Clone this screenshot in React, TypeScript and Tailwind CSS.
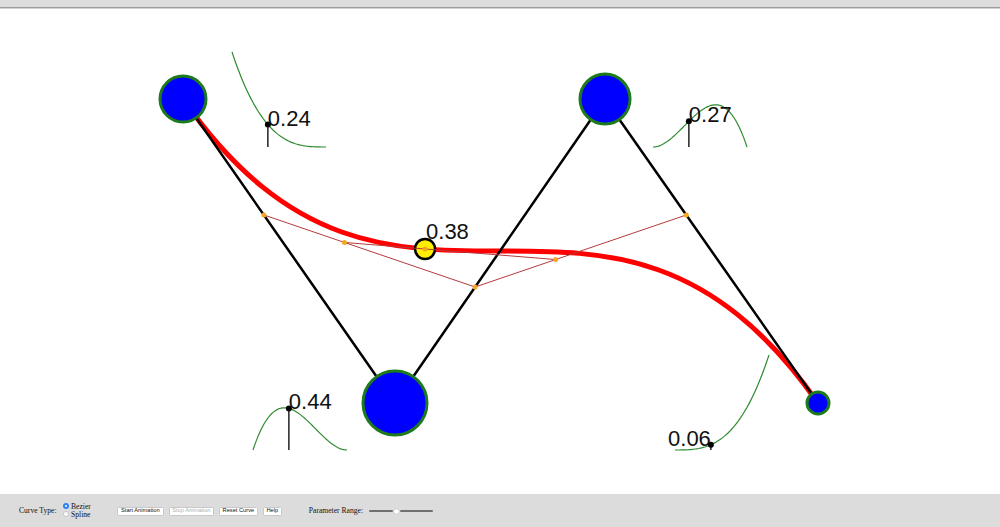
import React from "react";

type Pt = { x: number; y: number };

// control points of the cubic, in page coordinates
const points: Pt[] = [
  { x: 183, y: 99 },
  { x: 395, y: 403 },
  { x: 605, y: 99 },
  { x: 818, y: 403 },
];
const radii = [23, 32, 25, 11];
const T = 0.3815;

const lerp = (a: Pt, b: Pt, t: number): Pt => ({ x: a.x + (b.x - a.x) * t, y: a.y + (b.y - a.y) * t });

const basis = [
  (t: number) => (1 - t) ** 3,
  (t: number) => 3 * t * (1 - t) ** 2,
  (t: number) => 3 * t * t * (1 - t),
  (t: number) => t ** 3,
];

// little weight plots next to each control point
const graphs = [
  { x0: 232, bottom: 147, anchor: "start" },
  { x0: 253, bottom: 450, anchor: "start" },
  { x0: 653, bottom: 147, anchor: "start" },
  { x0: 675, bottom: 450, anchor: "end" },
];
const GW = 94;
const GH = 95;

const graphPath = (i: number) => {
  const g = graphs[i];
  let d = "";
  for (let k = 0; k <= 60; k++) {
    const t = k / 60;
    const x = g.x0 + t * GW;
    const y = g.bottom - basis[i](t) * GH;
    d += `${k === 0 ? "M" : "L"}${x.toFixed(2)} ${y.toFixed(2)} `;
  }
  return d;
};

const Curve = () => {
  const q = [lerp(points[0], points[1], T), lerp(points[1], points[2], T), lerp(points[2], points[3], T)];
  const r = [lerp(q[0], q[1], T), lerp(q[1], q[2], T)];
  const b = lerp(r[0], r[1], T);
  const font = { fontFamily: '"Liberation Sans", Arial, sans-serif' };

  return (
    <svg width={1000} height={485} viewBox="0 9 1000 485" className="block">
      {/* basis plots */}
      {graphs.map((g, i) => {
        const v = basis[i](T);
        const dx = g.x0 + T * GW;
        const dy = g.bottom - v * GH;
        return (
          <g key={i}>
            <path d={graphPath(i)} fill="none" stroke="#2f8a2f" strokeWidth={1.2} />
            <line x1={dx} y1={dy} x2={dx} y2={g.bottom} stroke="#222" strokeWidth={1.5} />
            <circle cx={dx} cy={dy} r={3} fill="#000" />
            <text x={dx} y={dy + 1} fontSize={22} fill="#111" textAnchor={g.anchor as "start" | "end"} style={font}>
              {v.toFixed(2)}
            </text>
          </g>
        );
      })}

      {/* the curve */}
      <path
        d={`M${points[0].x} ${points[0].y} C${points[1].x} ${points[1].y} ${points[2].x} ${points[2].y} ${points[3].x} ${points[3].y}`}
        fill="none"
        stroke="#ff0000"
        strokeWidth={5}
      />

      {/* control polygon */}
      <polyline points={points.map((p) => `${p.x},${p.y}`).join(" ")} fill="none" stroke="#000" strokeWidth={2.5} />

      {/* point on curve */}
      <circle cx={b.x} cy={b.y} r={10} fill="#ffee00" stroke="#000" strokeWidth={2.5} />

      {/* de Casteljau construction */}
      <polyline points={q.map((p) => `${p.x},${p.y}`).join(" ")} fill="none" stroke="#b53a3a" strokeWidth={1} />
      <line x1={r[0].x} y1={r[0].y} x2={r[1].x} y2={r[1].y} stroke="#b53a3a" strokeWidth={1} />
      {[...q, ...r, b].map((p, i) => (
        <circle key={i} cx={p.x} cy={p.y} r={2.5} fill="#f5a623" />
      ))}

      <text x={b.x + 1} y={b.y - 10} fontSize={22} fill="#111" style={font}>
        {T.toFixed(2)}
      </text>

      {/* control points */}
      {points.map((p, i) => (
        <circle key={i} cx={p.x} cy={p.y} r={radii[i]} fill="#0000ff" stroke="#1d7a1d" strokeWidth={3} />
      ))}
    </svg>
  );
};

const Radio = ({ checked }: { checked: boolean }) =>
  checked ? (
    <span className="flex w-[6.5px] h-[6.5px] rounded-full bg-[#2f7ff5] items-center justify-center">
      <span className="w-[2px] h-[2px] rounded-full bg-white" />
    </span>
  ) : (
    <span className="block w-[6.5px] h-[6.5px] rounded-full bg-white border-[0.5px] border-[#c4c4c4]" />
  );

const Btn = ({ label, w, disabled }: { label: string; w: string; disabled?: boolean }) => (
  <button
    className={`${w} h-[9px] flex items-center justify-center rounded-[1.5px] bg-white border-[0.5px] border-[#c8c8c8] text-[5.7px] leading-none whitespace-nowrap font-['Liberation_Sans',Arial,sans-serif] ${
      disabled ? "text-[#b0b0b0]" : "text-[#111]"
    }`}
  >
    {label}
  </button>
);

export default function App() {
  return (
    <div className="w-[1000px] h-[527px] flex flex-col bg-white overflow-hidden">
      <div className="h-[7px] bg-[#dddddd]" />
      <div className="h-[1px] bg-[#9c9c9c]" />
      <div className="h-[1px] bg-[#d2d2d2]" />

      <div className="flex-1 min-h-0">
        <Curve />
      </div>

      <div className="h-[33px] bg-[#dcdcdc] flex items-center pl-[19px] text-[7.6px] text-[#111] font-['Liberation_Serif','Times_New_Roman',serif]">
        <span className="mt-[1px]">Curve Type:</span>
        <div className="flex flex-col ml-[6px] gap-[1px] -mt-[1px]">
          <label className="flex items-center gap-[2px] leading-[7px]">
            <Radio checked />
            <span>Bezier</span>
          </label>
          <label className="flex items-center gap-[2px] leading-[7px]">
            <Radio checked={false} />
            <span>Spline</span>
          </label>
        </div>

        <div className="flex items-center gap-[5px] ml-[26px] mt-[1px]">
          <Btn label="Start Animation" w="w-[47px]" />
          <Btn label="Stop Animation" w="w-[45px]" disabled />
          <Btn label="Reset Curve" w="w-[39px]" />
          <Btn label="Help" w="w-[19px]" />
        </div>

        <span className="ml-[27px] mt-[1px]">Parameter Range:</span>
        <div className="flex items-center w-[64px] ml-[6px] mt-[1px]">
          <div className="w-[24px] h-[2px] bg-[#707070] rounded-full" />
          <div className="w-[5px] h-[5px] mx-[1px] rounded-full bg-white shadow-[0_0_1px_rgba(0,0,0,0.4)]" />
          <div className="flex-1 h-[2px] bg-[#707070] rounded-full" />
        </div>
      </div>
    </div>
  );
}
